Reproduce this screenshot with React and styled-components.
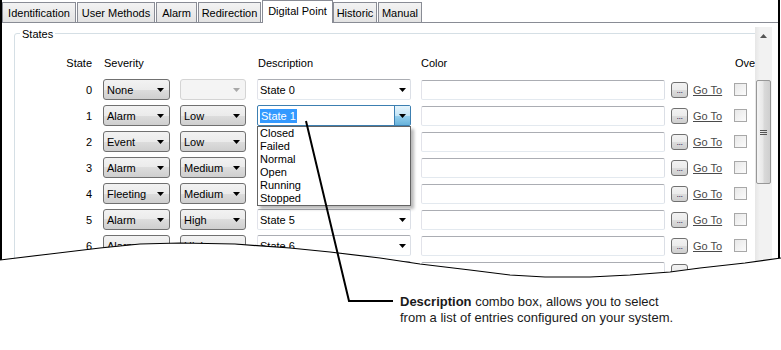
import React from "react";
import styled, { createGlobalStyle, css } from "styled-components";

const Global = createGlobalStyle`
  html, body { margin: 0; padding: 0; background: #fff; }
  body { font-family: "Liberation Sans", Arial, sans-serif; }
`;

const Page = styled.div`
  width: 781px;
  height: 350px;
  position: relative;
  overflow: hidden;
  background: #fff;
  font-family: "Liberation Sans", Arial, sans-serif;
`;

const Dialog = styled.div`
  width: 780px;
  height: 290px;
  box-sizing: border-box;
  border-left: 2px solid #000;
  border-right: 2px solid #000;
  display: flex;
  flex-direction: column;
  background: #fff;
  overflow: hidden;
`;

const TabStrip = styled.div`
  height: 22px;
  display: flex;
  align-items: flex-end;
  position: relative;
  z-index: 1;
  flex-shrink: 0;
`;

const Tab = styled.div`
  box-sizing: border-box;
  width: ${(p) => p.$w}px;
  height: 20px;
  margin-right: 1px;
  border: 1px solid #898c95;
  border-bottom: none;
  background: linear-gradient(#f3f3f3, #e3e3e3);
  font-size: 11px;
  color: #000;
  display: flex;
  align-items: center;
  justify-content: center;
  white-space: nowrap;
  ${(p) =>
    p.$active &&
    css`
      height: 23px;
      margin-bottom: -1px;
      margin-right: 0;
      background: #fff;
      padding-bottom: 2px;
    `}
`;

const TabPage = styled.div`
  flex: 1;
  min-height: 0;
  border-top: 1px solid #898c95;
  padding: 4px 6px 0 2px;
  display: flex;
`;

const Content = styled.div`
  flex: 1;
  min-width: 0;
  overflow: hidden;
  position: relative;
`;

const GroupBox = styled.div`
  position: relative;
  width: 900px;
  margin: 6px 0 0 10px;
  border: 1px solid #d5dfe5;
  border-radius: 3px;
  padding-top: 22px;
  height: 600px;
  box-sizing: border-box;
`;

const Legend = styled.span`
  position: absolute;
  top: -7px;
  left: 5px;
  padding: 0 2px;
  background: #fff;
  font-size: 11px;
  line-height: 14px;
`;

const cols = "88px 77px 77px 164px 250px 22px 41px 30px";

const HeaderRow = styled.div`
  display: grid;
  grid-template-columns: ${cols};
  height: 14px;
  line-height: 14px;
  font-size: 11px;
  margin-bottom: 9px;
  white-space: nowrap;
`;

const HeaderCell = styled.div`
  padding-left: ${(p) => p.$pl || 0}px;
  text-align: ${(p) => (p.$right ? "right" : "left")};
  padding-right: ${(p) => (p.$right ? 11 : 0)}px;
  grid-column: ${(p) => p.$col};
`;

const Row = styled.div`
  display: grid;
  grid-template-columns: ${cols};
  align-items: center;
  height: 21px;
  margin-bottom: 5px;
  font-size: 11px;
`;

const Num = styled.div`
  text-align: right;
  padding-right: 11px;
`;

const Combo = styled.div`
  box-sizing: border-box;
  width: ${(p) => p.$w}px;
  height: 21px;
  border: 1px solid #707070;
  border-radius: 3px;
  background: linear-gradient(#f2f2f2 0%, #ebebeb 50%, #dddddd 50%, #cfcfcf 100%);
  display: flex;
  align-items: center;
  justify-content: space-between;
  padding: 0 5px 0 3px;
  font-size: 11px;
  color: #000;
  ${(p) =>
    p.$disabled &&
    css`
      border-color: #d4d4d4;
      background: #f4f4f4;
    `}
`;

const Arrow = ({ color = "#000" }) => (
  <svg width="7" height="4" viewBox="0 0 7 4">
    <polygon points="0,0 7,0 3.5,4" fill={color} />
  </svg>
);

const Cell = styled.div`
  position: relative;
`;

const EditCombo = styled.div`
  box-sizing: border-box;
  width: 154px;
  height: 21px;
  border: 1px solid;
  border-color: #abadb3 #dbdfe6 #e3e9ef #e2e3ea;
  border-radius: 2px;
  background: #fff;
  display: flex;
  align-items: center;
  padding-left: 2px;
  font-size: 11px;
  ${(p) =>
    p.$open &&
    css`
      border-color: #3c7fb1;
    `}
`;

const EditText = styled.span`
  flex: 1;
  ${(p) =>
    p.$selected &&
    css`
      flex: none;
      background: #3399ff;
      color: #fff;
      padding: 1px 1px;
      margin-right: auto;
    `}
`;

const DropButton = styled.div`
  width: 16px;
  align-self: stretch;
  display: flex;
  align-items: center;
  justify-content: center;
  box-sizing: border-box;
  ${(p) =>
    p.$open &&
    css`
      border-left: 1px solid #3c7fb1;
      background: linear-gradient(#e5f4fc 0%, #c4e5f6 50%, #98d1ef 50%, #68b3db 100%);
    `}
`;

const DropList = styled.div`
  position: absolute;
  top: 100%;
  left: 0;
  width: 154px;
  box-sizing: border-box;
  border: 1px solid #646464;
  background: #fff;
  box-shadow: 3px 3px 3px rgba(0, 0, 0, 0.28);
  z-index: 5;
`;

const DropItem = styled.div`
  height: 13px;
  line-height: 13px;
  padding-left: 2px;
  font-size: 11px;
  color: #000;
`;

const TextBox = styled.div`
  box-sizing: border-box;
  width: 244px;
  height: 20px;
  border: 1px solid;
  border-color: #abadb3 #dbdfe6 #e3e9ef #e2e3ea;
  border-radius: 2px;
  background: #fff;
`;

const DotsButton = styled.div`
  box-sizing: border-box;
  width: 17px;
  height: 16px;
  border: 1px solid #707070;
  border-radius: 3px;
  background: linear-gradient(#f2f2f2 0%, #ebebeb 50%, #dddddd 50%, #cfcfcf 100%);
  display: flex;
  align-items: flex-end;
  justify-content: center;
  font-size: 9px;
  line-height: 9px;
  color: #3a2a5a;
  padding-bottom: 2px;
  letter-spacing: -0.5px;
`;

const GoTo = styled.span`
  font-size: 11px;
  color: #4a4a4a;
  text-decoration: underline;
  white-space: nowrap;
`;

const CheckBox = styled.div`
  box-sizing: border-box;
  width: 13px;
  height: 13px;
  border: 1px solid #a8a8a8;
  background: linear-gradient(135deg, #e8e8e8, #fbfbfb);
`;

const Scrollbar = styled.div`
  width: 17px;
  flex-shrink: 0;
  background: linear-gradient(90deg, #e6e6e6, #f2f2f2 30%, #f2f2f2);
  display: flex;
  flex-direction: column;
  align-items: center;
`;

const ScrollArrow = styled.div`
  height: 17px;
  width: 17px;
  display: flex;
  align-items: center;
  justify-content: center;
`;

const Thumb = styled.div`
  margin-top: 36px;
  width: 15px;
  height: 104px;
  box-sizing: border-box;
  border: 1px solid #979797;
  border-radius: 2px;
  background: linear-gradient(90deg, #f4f4f4, #e8e8e8 45%, #d9d9d9 55%, #cfcfcf);
  display: flex;
  align-items: center;
  justify-content: center;
`;

const Grip = styled.div`
  width: 7px;
  height: 5px;
  background: repeating-linear-gradient(#555 0 1px, transparent 1px 2px);
`;

const Callout = styled.div`
  position: relative;
  z-index: 11;
  margin: 4px 0 0 400px;
  font-size: 13px;
  line-height: 16px;
  color: #1a1a1a;
  white-space: nowrap;
`;

const Overlay = styled.svg`
  position: absolute;
  left: 0;
  top: 0;
  pointer-events: none;
  z-index: 10;
`;

const tabs = [
  ["Identification", 74],
  ["User Methods", 78],
  ["Alarm", 41],
  ["Redirection", 63],
  ["Digital Point", 71, true],
  ["Historic", 44],
  ["Manual", 44],
];

const rows = [
  ["None", null, "State 0"],
  ["Alarm", "Low", "State 1"],
  ["Event", "Low", "State 2"],
  ["Alarm", "Medium", "State 3"],
  ["Fleeting", "Medium", "State 4"],
  ["Alarm", "High", "State 5"],
  ["Alarm", "High", "State 6"],
  ["Alarm", "High", "State 7"],
];

const listItems = ["Closed", "Failed", "Normal", "Open", "Running", "Stopped"];

const wave = [
  [0, 260], [50, 254], [100, 248], [140, 244], [180, 243], [235, 244],
  [290, 248], [330, 252], [380, 258], [420, 264], [470, 270], [510, 275],
  [545, 277], [590, 277], [630, 275], [670, 272], [700, 268], [745, 263],
  [781, 258],
];

export default function App() {
  const wavePts = wave.map((p) => p.join(",")).join(" ");
  return (
    <Page>
      <Global />
      <Dialog>
        <TabStrip>
          {tabs.map(([label, w, active]) => (
            <Tab key={label} $w={w} $active={active}>
              {label}
            </Tab>
          ))}
        </TabStrip>
        <TabPage>
          <Content>
            <GroupBox>
              <Legend>States</Legend>
              <HeaderRow>
                <HeaderCell $right $col={1}>State</HeaderCell>
                <HeaderCell $pl={1} $col={2}>Severity</HeaderCell>
                <HeaderCell $pl={1} $col={4}>Description</HeaderCell>
                <HeaderCell $col={5}>Color</HeaderCell>
                <HeaderCell $pl={1} $col={8}>Override</HeaderCell>
              </HeaderRow>
              {rows.map(([sev, lvl, desc], i) => (
                <Row key={i}>
                  <Num>{i}</Num>
                  <Combo $w={67}>
                    <span>{sev}</span>
                    <Arrow />
                  </Combo>
                  {lvl ? (
                    <Combo $w={66}>
                      <span>{lvl}</span>
                      <Arrow />
                    </Combo>
                  ) : (
                    <Combo $w={66} $disabled>
                      <span />
                      <Arrow color="#a8a8a8" />
                    </Combo>
                  )}
                  <Cell>
                    <EditCombo $open={i === 1}>
                      <EditText $selected={i === 1}>{desc}</EditText>
                      <DropButton $open={i === 1}>
                        <Arrow />
                      </DropButton>
                    </EditCombo>
                    {i === 1 && (
                      <DropList>
                        {listItems.map((it) => (
                          <DropItem key={it}>{it}</DropItem>
                        ))}
                      </DropList>
                    )}
                  </Cell>
                  <TextBox />
                  <DotsButton>...</DotsButton>
                  <GoTo>Go To</GoTo>
                  <CheckBox />
                </Row>
              ))}
            </GroupBox>
          </Content>
          <Scrollbar>
            <ScrollArrow>
              <svg width="7" height="4" viewBox="0 0 7 4">
                <polygon points="0,4 7,4 3.5,0" fill="#555" />
              </svg>
            </ScrollArrow>
            <Thumb>
              <Grip />
            </Thumb>
          </Scrollbar>
        </TabPage>
      </Dialog>
      <Callout>
        <b>Description</b> combo box, allows you to select
        <br />
        from a list of entries configured on your system.
      </Callout>
      <Overlay width="781" height="350" viewBox="0 0 781 350">
        <polygon points={`${wavePts} 781,350 0,350`} fill="#fff" />
        <polyline points={wavePts} fill="none" stroke="#000" strokeWidth="1.2" />
        <polyline
          points="306,121 349,301 393,301"
          fill="none"
          stroke="#000"
          strokeWidth="2"
        />
      </Overlay>
    </Page>
  );
}
